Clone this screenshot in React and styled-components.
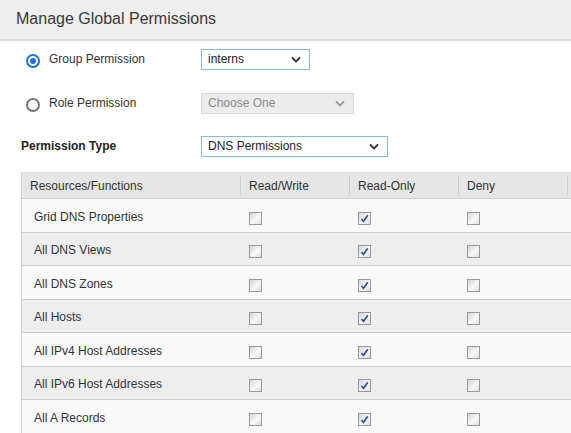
import React from "react";
import styled, { createGlobalStyle } from "styled-components";

const GlobalStyle = createGlobalStyle`
  html, body {
    margin: 0;
    padding: 0;
    background: #fff;
    overflow: hidden;
  }
  body {
    font-family: "Liberation Sans", Arial, sans-serif;
    font-size: 12px;
    color: #333;
  }
`;

const Page = styled.div`
  width: 571px;
  height: 433px;
  overflow: hidden;
`;

const Header = styled.div`
  height: 41px;
  background: #eeeeee;
  border-bottom: 2px solid #dcdcdc;
  display: flex;
  align-items: center;
  padding-left: 16px;
  padding-bottom: 1px;
  box-sizing: border-box;
`;

const Title = styled.h1`
  margin: 0;
  font-size: 16px;
  font-weight: normal;
  color: #3a3a3a;
`;

const Form = styled.div`
  padding: 7px 0 0 21px;
  display: flex;
  flex-direction: column;
`;

const FormRow = styled.div`
  display: grid;
  grid-template-columns: 180px auto;
  align-items: center;
  height: 22px;
  margin-bottom: ${(p) => p.$gap ?? 22}px;
`;

const RadioLabel = styled.label`
  display: flex;
  align-items: center;
  gap: 9px;
  padding-left: 5px;
  color: #333;
`;

const Radio = styled.span`
  width: 14px;
  height: 14px;
  box-sizing: border-box;
  border-radius: 50%;
  border: 2px solid ${(p) => (p.$on ? "#1a73e8" : "#767676")};
  display: flex;
  align-items: center;
  justify-content: center;
  margin-top: 3px;

  &::after {
    content: "";
    width: 6px;
    height: 6px;
    border-radius: 50%;
    background: ${(p) => (p.$on ? "#1a73e8" : "transparent")};
  }
`;

const BoldLabel = styled.span`
  font-weight: bold;
  color: #222;
`;

const Select = styled.div`
  width: ${(p) => p.$w}px;
  height: 21px;
  box-sizing: border-box;
  border: 1px solid ${(p) => (p.$disabled ? "#d9d9d9" : "#86b9e6")};
  background: ${(p) => (p.$disabled ? "#ececec" : "#fff")};
  color: ${(p) => (p.$disabled ? "#8a8a8a" : "#222")};
  display: flex;
  align-items: center;
  justify-content: space-between;
  padding: 0 8px 0 6px;

  svg {
    stroke: ${(p) => (p.$disabled ? "#9a9a9a" : "#333")};
  }
`;

const Table = styled.div`
  margin-top: 15px;
  margin-left: 21px;
  width: 600px;
  border-left: 1px solid #cfcfcf;
`;

const Row = styled.div`
  display: grid;
  grid-template-columns: 219px 109px 109px 109px 60px;
  height: ${(p) => (p.$head ? 27 : 33.5)}px;
  box-sizing: border-box;
  border-top: ${(p) => (p.$head ? "1px solid #e0e0e0" : "none")};
  border-bottom: 1px solid #cccccc;
  background: ${(p) => (p.$head ? "#e6e6e6" : p.$alt ? "#eeeeee" : "#f9f9f9")};
`;

const HeadCell = styled.div`
  display: flex;
  align-items: center;
  padding-left: 8px;
  border-right: 1px solid #cdcdcd;
  margin: 3px 0;
  color: #333;
`;

const Cell = styled.div`
  display: flex;
  align-items: center;
  padding-left: ${(p) => (p.$name ? 12 : 8)}px;
  padding-top: 3px;
  color: #333;
`;

const Box = styled.span`
  width: 13px;
  height: 13px;
  box-sizing: border-box;
  border: 1px solid #999;
  background: linear-gradient(135deg, #d4d4d4 0%, #f8f8f8 55%, #dedede 100%);
  display: flex;
  align-items: center;
  justify-content: center;
  margin-top: 3px;
`;

const Chevron = () => (
  <svg width="10" height="7" viewBox="0 0 10 7" fill="none" strokeWidth="1.8">
    <polyline points="1,1.5 5,5.5 9,1.5" />
  </svg>
);

const Check = () => (
  <svg width="9" height="9" viewBox="0 0 9 9" fill="none">
    <polyline points="1.5,5 3.5,7.3 7.8,1.2" stroke="#2f4fb0" strokeWidth="1.7" />
  </svg>
);

const resources = [
  "Grid DNS Properties",
  "All DNS Views",
  "All DNS Zones",
  "All Hosts",
  "All IPv4 Host Addresses",
  "All IPv6 Host Addresses",
  "All A Records",
];

export default function App() {
  return (
    <Page>
      <GlobalStyle />
      <Header>
        <Title>Manage Global Permissions</Title>
      </Header>
      <Form>
        <FormRow>
          <RadioLabel>
            <Radio $on />
            Group Permission
          </RadioLabel>
          <Select $w={109}>
            interns
            <Chevron />
          </Select>
        </FormRow>
        <FormRow $gap={21}>
          <RadioLabel>
            <Radio />
            Role Permission
          </RadioLabel>
          <Select $w={153} $disabled>
            Choose One
            <Chevron />
          </Select>
        </FormRow>
        <FormRow $gap={0}>
          <BoldLabel>Permission Type</BoldLabel>
          <Select $w={187}>
            DNS Permissions
            <Chevron />
          </Select>
        </FormRow>
      </Form>
      <Table>
        <Row $head>
          <HeadCell>Resources/Functions</HeadCell>
          <HeadCell>Read/Write</HeadCell>
          <HeadCell>Read-Only</HeadCell>
          <HeadCell>Deny</HeadCell>
          <HeadCell />
        </Row>
        {resources.map((name, i) => (
          <Row key={name} $alt={i % 2 === 1}>
            <Cell $name>{name}</Cell>
            <Cell>
              <Box />
            </Cell>
            <Cell>
              <Box>
                <Check />
              </Box>
            </Cell>
            <Cell>
              <Box />
            </Cell>
            <Cell />
          </Row>
        ))}
      </Table>
    </Page>
  );
}
